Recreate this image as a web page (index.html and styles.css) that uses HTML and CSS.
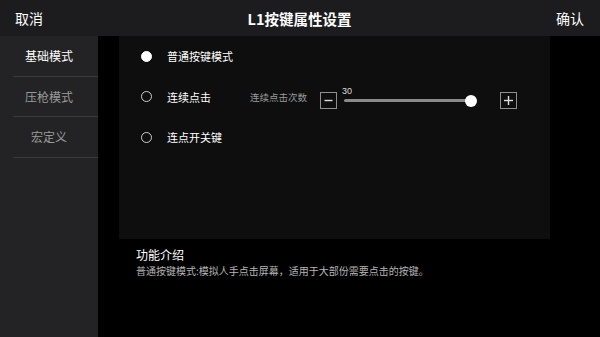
FILE: index.html
```html
<!DOCTYPE html>
<html>
<head>
<meta charset="utf-8">
<link rel="stylesheet" href="styles.css">
</head>
<body>
<div class="app">
  <div class="header">
    <span class="hbtn">取消</span>
    <span class="title">L1按键属性设置</span>
    <span class="hbtn">确认</span>
  </div>
  <div class="body">
    <div class="sidebar">
      <div class="tab active">基础模式</div>
      <div class="tab">压枪模式</div>
      <div class="tab">宏定义</div>
    </div>
    <div class="main">
      <div class="panel">
        <div class="row">
          <span class="radio on"></span>
          <span class="label">普通按键模式</span>
        </div>
        <div class="row">
          <span class="radio"></span>
          <span class="label">连续点击</span>
          <span class="sub">连续点击次数</span>
          <div class="stepper">
            <span class="box minus"><svg width="15" height="15" viewBox="0 0 15 15"><line x1="3.5" y1="7.5" x2="11.5" y2="7.5" stroke="#ddd" stroke-width="1.4"/></svg></span>
            <div class="slider">
              <span class="val">30</span>
              <div class="track"><span class="thumb"></span></div>
            </div>
            <span class="box plus"><svg width="15" height="15" viewBox="0 0 15 15"><line x1="3" y1="7.5" x2="12" y2="7.5" stroke="#ddd" stroke-width="1.4"/><line x1="7.5" y1="3" x2="7.5" y2="12" stroke="#ddd" stroke-width="1.4"/></svg></span>
          </div>
        </div>
        <div class="row">
          <span class="radio"></span>
          <span class="label">连点开关键</span>
        </div>
      </div>
      <div class="intro">
        <div class="intro-title">功能介绍</div>
        <div class="intro-text">普通按键模式:模拟人手点击屏幕，适用于大部份需要点击的按键。</div>
      </div>
    </div>
  </div>
</div>
</body>
</html>
```
FILE: styles.css
```css
* { box-sizing: border-box; }
html, body { margin: 0; padding: 0; background: #000; }
body { font-family: "Noto Sans CJK SC", "Noto Sans", sans-serif; color: #fff; }
.app { width: 600px; height: 337px; display: flex; flex-direction: column; overflow: hidden; }
.header {
  height: 36px; background: #1c1c1f; display: flex; align-items: center;
  justify-content: space-between; padding: 0 16px 0 15px; flex: none;
}
.hbtn { font-size: 14px; color: #fff; }
.title { font-size: 14.5px; font-weight: bold; color: #fff; }
.body { flex: 1; display: flex; }
.sidebar { width: 98px; background: #232325; display: flex; flex-direction: column; padding-left: 13px; }
.tab {
  height: 40.5px; display: flex; align-items: center; justify-content: center;
  border-bottom: 1px solid #3a3a3c; font-size: 12px; color: #9a9a9a; padding-right: 13px;
}
.tab.active { color: #fff; }
.main { flex: 1; display: flex; flex-direction: column; padding-left: 21px; }
.panel { width: 431px; height: 203px; background: #0e0e0e; display: flex; flex-direction: column; }
.row { height: 40.5px; display: flex; align-items: center; padding-left: 22px; }
.radio { width: 11px; height: 11px; border-radius: 50%; border: 1.2px solid #cfcfcf; flex: none; }
.radio.on { background: #fff; border-color: #fff; }
.label { font-size: 11px; color: #fff; margin-left: 15px; width: 83px; }
.sub { font-size: 9.5px; color: #9a9a9a; width: 70px; }
.stepper { display: flex; align-items: center; margin-top: 8px; }
.box { width: 17px; height: 17px; border: 1px solid #8f8f8f; display: flex; align-items: center; justify-content: center; flex: none; }
.box svg { display: block; }
.slider { position: relative; width: 163px; height: 17px; padding: 0 29px 0 7px; display: flex; align-items: center; }
.val { position: absolute; left: 5px; top: -6px; font-size: 9px; color: #ddd; font-family: "Liberation Sans", sans-serif; }
.track { position: relative; flex: 1; height: 3px; background: #8a8a8a; border-radius: 2px; }
.thumb { position: absolute; right: -6px; top: -4.5px; width: 12px; height: 12px; border-radius: 50%; background: #fff; }
.intro { padding: 8px 0 0 17px; }
.intro-title { font-size: 12px; color: #fff; line-height: 16px; }
.intro-text { font-size: 10px; color: #b5b5b5; line-height: 14px; margin-top: 1px; }
```
